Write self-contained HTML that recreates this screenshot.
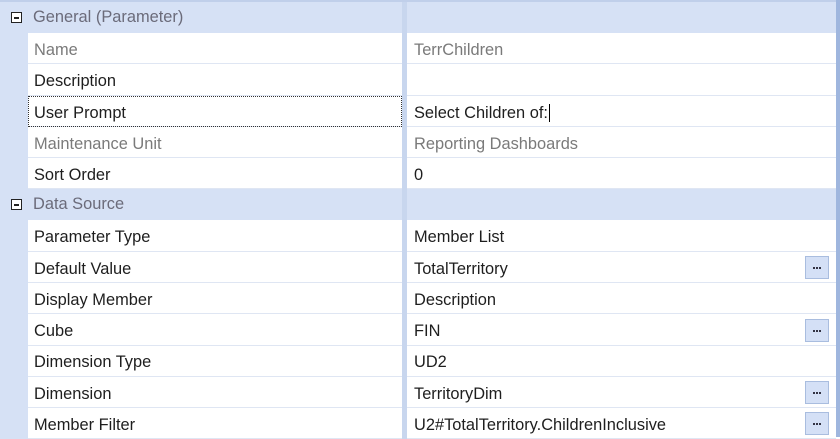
<!DOCTYPE html>
<html><head><style>
body{margin:0;width:840px;height:437px;overflow:hidden;background:#fff;font-family:"Liberation Sans",sans-serif;font-size:16.4px;color:#1e1e1e;position:relative}
.top{position:absolute;left:0;top:0;width:840px;height:2px;background:#c0cfea}
.gut{position:absolute;left:0;top:2px;width:28px;height:437px;background:#d6e1f5}
.div{position:absolute;left:402px;top:2px;width:5px;height:437px;background:#c8d6ee;z-index:3}
.rb{position:absolute;left:836px;top:0;width:4px;height:437px;background:#9fb6de;z-index:4}
.row{position:absolute;left:28px;width:808px;height:31px;border-bottom:1px solid #dfe6f3;box-sizing:border-box}
.row .l{position:absolute;left:6px;top:7.5px}
.row .v{position:absolute;left:386px;top:7.5px}
.g{color:#7a7a7a}
.hd{position:absolute;left:0;width:836px;height:31px;background:#d6e1f5}
.hd span{position:absolute;left:33px;top:6px;color:#6b6b7a}
.box{position:absolute;left:11px;top:10px;width:9px;height:9px;border:1px solid #222;background:#fff}
.box:after{content:"";position:absolute;left:2px;top:4px;width:5px;height:1.5px;background:#222}
.btn{position:absolute;left:777px;top:4px;width:24px;height:23px;border:1px solid #a9bddf;background:#d4e0f6;box-sizing:border-box}
.btn:after{content:"";position:absolute;left:7px;top:10px;width:2px;height:2px;background:#334;box-shadow:3px 0 #334,6px 0 #334}
.focus{position:absolute;left:28px;top:96px;width:374px;height:31px;border:1px dotted #333;box-sizing:border-box;z-index:2}
</style></head><body>
<div class="top"></div>
<div class="gut"></div>
<div class="hd" style="top:2px"><div class="box"></div><span>General (Parameter)</span></div>
<div class="row" style="top:33px"><span class="l g">Name</span><span class="v g">TerrChildren</span></div>
<div class="row" style="top:64.5px"><span class="l">Description</span></div>
<div class="row" style="top:96px"><span class="l">User Prompt</span><span class="v">Select Children of:<span style="border-left:1px solid #000;margin-left:1px"></span></span></div>
<div class="focus"></div>
<div class="row" style="top:127px"><span class="l g">Maintenance Unit</span><span class="v g">Reporting Dashboards</span></div>
<div class="row" style="top:158px"><span class="l">Sort Order</span><span class="v">0</span></div>
<div class="hd" style="top:189px"><div class="box"></div><span>Data Source</span></div>
<div class="row" style="top:220.5px"><span class="l">Parameter Type</span><span class="v">Member List</span></div>
<div class="row" style="top:252px"><span class="l">Default Value</span><span class="v">TotalTerritory</span><div class="btn"></div></div>
<div class="row" style="top:283px"><span class="l">Display Member</span><span class="v">Description</span></div>
<div class="row" style="top:314.5px"><span class="l">Cube</span><span class="v">FIN</span><div class="btn"></div></div>
<div class="row" style="top:345.5px"><span class="l">Dimension Type</span><span class="v">UD2</span></div>
<div class="row" style="top:377px"><span class="l">Dimension</span><span class="v">TerritoryDim</span><div class="btn"></div></div>
<div class="row" style="top:408px"><span class="l">Member Filter</span><span class="v">U2#TotalTerritory.ChildrenInclusive</span><div class="btn"></div></div>
<div class="div"></div>
<div class="rb"></div>
</body></html>
